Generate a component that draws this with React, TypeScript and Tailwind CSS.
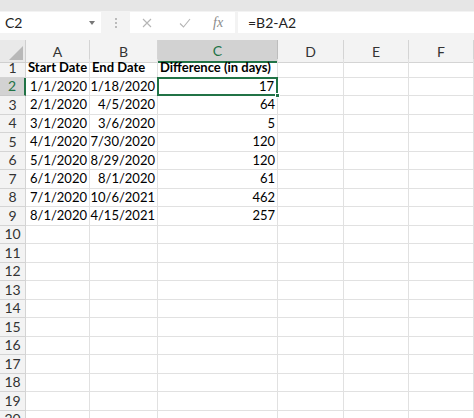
import React from 'react';

const cols = ['A', 'B', 'C', 'D', 'E', 'F'];

const data: [string, string, string][] = [
  ['1/1/2020', '1/18/2020', '17'],
  ['2/1/2020', '4/5/2020', '64'],
  ['3/1/2020', '3/6/2020', '5'],
  ['4/1/2020', '7/30/2020', '120'],
  ['5/1/2020', '8/29/2020', '120'],
  ['6/1/2020', '8/1/2020', '61'],
  ['7/1/2020', '10/6/2021', '462'],
  ['8/1/2020', '4/15/2021', '257'],
];

const grid = 'grid grid-cols-[26px_64px_68px_120px_66px_65px_1fr]';
const cell = 'border-r border-b border-[#e1e1e1] px-[2px] flex items-center overflow-hidden whitespace-nowrap';

export default function App() {
  const rows = Array.from({ length: 20 }, (_, i) => i + 1);

  return (
    <div className="w-[474px] h-[418px] overflow-hidden bg-white text-black" style={{ fontFamily: 'Lato, "Noto Sans", sans-serif' }}>
      {/* formula bar */}
      <div className="h-[11px] bg-[#e6e6e6]" />
      <div className="h-[29px] bg-[#f3f3f3] pt-[1px] flex items-start">
        <div className="w-[101px] h-[21px] bg-white flex items-center justify-between pl-[5px] pr-[6px] text-[14px] text-[#222]">
          <span>C2</span>
          <span className="w-0 h-0 border-l-[3px] border-r-[3px] border-t-[4px] border-l-transparent border-r-transparent border-t-[#777]" />
        </div>
        <div className="w-[29px] h-[21px] flex flex-col items-center justify-center gap-[2px]">
          <span className="w-[2px] h-[2px] bg-[#bbb]" />
          <span className="w-[2px] h-[2px] bg-[#bbb]" />
          <span className="w-[2px] h-[2px] bg-[#bbb]" />
        </div>
        <div className="w-[105px] h-[21px] bg-white flex items-center text-[#b5b5b5]">
          <svg className="ml-[12px]" width="10" height="10" viewBox="0 0 10 10">
            <path d="M1 1 L9 9 M9 1 L1 9" stroke="#b5b5b5" strokeWidth="1.1" fill="none" />
          </svg>
          <svg className="ml-[27px]" width="12" height="10" viewBox="0 0 12 10">
            <path d="M1 5.5 L4.5 9 L11 1" stroke="#b5b5b5" strokeWidth="1.1" fill="none" />
          </svg>
          <span className="ml-[22px] italic text-[14px] text-[#8a8a8a]" style={{ fontFamily: '"Liberation Serif", serif' }}>fx</span>
        </div>
        <div className="ml-[3px] flex-1 h-[21px] bg-white flex items-center pl-[10px] text-[14px] text-[#222]">
          =B2-A2
        </div>
      </div>

      {/* sheet */}
      <div className={`${grid} h-[19px] text-[14px] text-[#333]`}>
        <div className="bg-[#e9e9e9] border-r border-b border-[#cfcfcf] relative overflow-hidden">
          <svg className="absolute right-[2px] bottom-[2px]" width="14" height="14" viewBox="0 0 14 14">
            <path d="M14 0 L14 14 L0 14 Z" fill="#b8b8b8" />
          </svg>
        </div>
        {cols.map((c) => (
          <div
            key={c}
            className={
              c === 'C'
                ? 'bg-[#d2d2d2] border-r border-[#bdbdbd] border-b-2 border-b-[#217346] flex items-center justify-center text-[#217346]'
                : 'bg-[#f3f3f3] border-r border-b border-[#d4d4d4] flex items-center justify-center'
            }
          >
            {c}
          </div>
        ))}
      </div>

      {rows.map((r) => {
        const d = r >= 2 && r <= 9 ? data[r - 2] : null;
        return (
          <div key={r} className={`${grid} h-[18.5px] text-[13px] leading-none`}>
            <div
              className={
                r === 2
                  ? 'bg-[#d2d2d2] border-r-2 border-r-[#217346] border-b border-b-[#c9c9c9] flex items-center justify-center text-[14px] text-[#217346]'
                  : 'bg-[#f3f3f3] border-r border-b border-[#d4d4d4] flex items-center justify-center text-[14px] text-[#333]'
              }
            >
              {r}
            </div>
            {r === 1 ? (
              <>
                <div className={`${cell} font-bold`}>Start Date</div>
                <div className={`${cell} font-bold`}>End Date</div>
                <div className={`${cell} font-bold`}>Difference (in days)</div>
              </>
            ) : d ? (
              <>
                <div className={`${cell} justify-end`}>{d[0]}</div>
                <div className={`${cell} justify-end`}>{d[1]}</div>
                {r === 2 ? (
                  <div className="relative border-2 border-[#217346] -ml-[1px] -mt-[1px] h-[19.5px] flex items-center justify-end px-[2px]">
                    17
                    <span className="absolute -right-[4px] -bottom-[4px] w-[5px] h-[5px] bg-[#217346] border border-white" />
                  </div>
                ) : (
                  <div className={`${cell} justify-end`}>{d[2]}</div>
                )}
              </>
            ) : (
              <>
                <div className={cell} />
                <div className={cell} />
                <div className={cell} />
              </>
            )}
            <div className={cell} />
            <div className={cell} />
            <div className={cell} />
          </div>
        );
      })}
    </div>
  );
}
